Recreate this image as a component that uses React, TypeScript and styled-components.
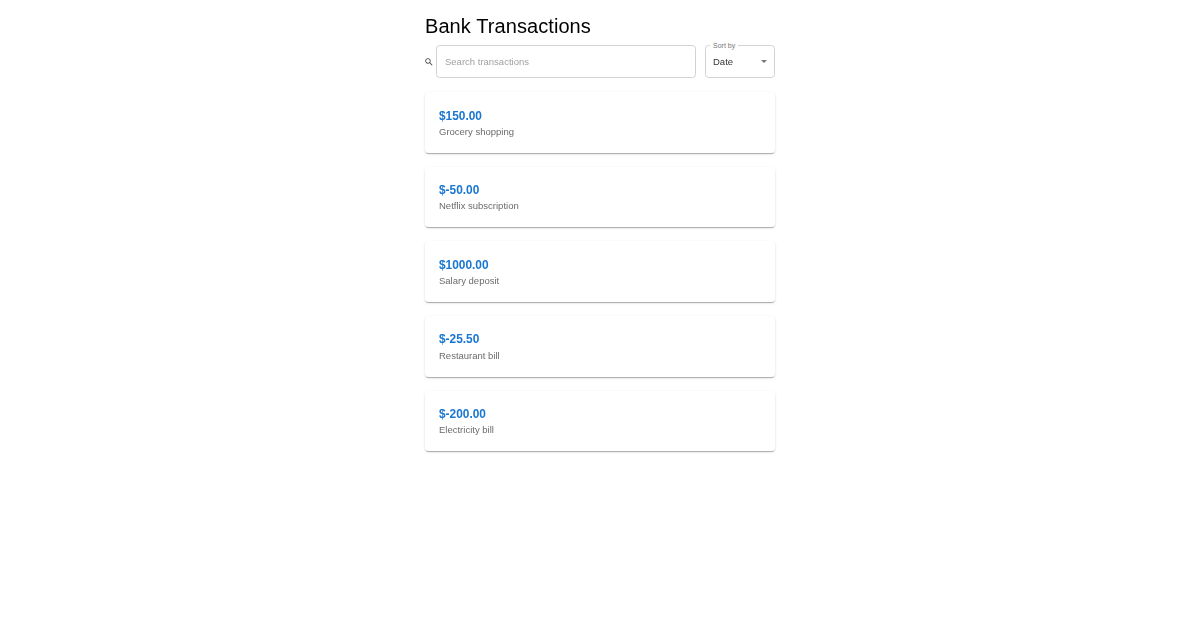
import React from 'react'
import styled, { createGlobalStyle } from 'styled-components'

const GlobalStyle = createGlobalStyle`
    html, body {
        margin: 0;
        padding: 0;
        background: #fff;
        font-family: "Liberation Sans", Arial, sans-serif;
    }
`

const Page = styled.main`
    width: 350px;
    margin: 0 auto;
    padding: 14px 0 24px;
    filter: blur(0.7px);
`

const Title = styled.h1`
    margin: 0 0 7px;
    height: 24px;
    font-size: 20px;
    line-height: 24px;
    font-weight: 400;
    letter-spacing: 0.08px;
    color: #000;
`

const Toolbar = styled.div`
    display: flex;
    align-items: center;
    margin-bottom: 14px;
`

const SearchIcon = styled.svg`
    width: 10px;
    height: 10px;
    margin-right: 2px;
    margin-left: -1px;
    flex: none;
`

const SearchField = styled.input`
    flex: 1;
    min-width: 0;
    height: 33px;
    box-sizing: border-box;
    padding: 0 8px;
    border: 1px solid #d2d2d2;
    border-radius: 3.5px;
    outline: none;
    font: 400 9.5px "Liberation Sans", Arial, sans-serif;
    color: #212121;
    &::placeholder {
        color: #a0a0a0;
        opacity: 1;
    }
`

const SortField = styled.div`
    position: relative;
    display: flex;
    align-items: center;
    justify-content: space-between;
    width: 70px;
    height: 33px;
    box-sizing: border-box;
    margin-left: 9px;
    padding: 0 7px;
    border: 1px solid #d2d2d2;
    border-radius: 3.5px;
    font-size: 9.5px;
    color: #333;
`

const SortLabel = styled.span`
    position: absolute;
    top: -4px;
    left: 4px;
    padding: 0 3px;
    background: #fff;
    font-size: 7px;
    line-height: 8px;
    color: #777;
`

const Caret = styled.span`
    width: 0;
    height: 0;
    border-left: 3px solid transparent;
    border-right: 3px solid transparent;
    border-top: 3px solid #777;
`

const List = styled.div`
    display: flex;
    flex-direction: column;
    gap: 14px;
`

const Card = styled.article`
    height: 60.67px;
    box-sizing: border-box;
    padding: 16.5px 14px 0;
    border-radius: 3.5px;
    background: #fff;
    box-shadow: 0 2px 1px -1px rgba(0, 0, 0, 0.18), 0 1px 1px 0 rgba(0, 0, 0, 0.12),
        0 1px 3px 0 rgba(0, 0, 0, 0.12);
`

const Amount = styled.div`
    font-size: 11.9px;
    line-height: 14px;
    font-weight: 700;
    color: #1976d2;
`

const Description = styled.div`
    margin-top: 2.2px;
    font-size: 9.5px;
    line-height: 14px;
    color: #6b6b6b;
`

const transactions = [
    { amount: '$150.00', description: 'Grocery shopping' },
    { amount: '$-50.00', description: 'Netflix subscription' },
    { amount: '$1000.00', description: 'Salary deposit' },
    { amount: '$-25.50', description: 'Restaurant bill' },
    { amount: '$-200.00', description: 'Electricity bill' },
]

const App: React.FC = () => (
    <>
        <GlobalStyle />
        <Page>
            <Title>Bank Transactions</Title>
            <Toolbar>
                <SearchIcon viewBox="0 0 24 24" fill="#444">
                    <path d="M15.5 14h-.79l-.28-.27C15.41 12.59 16 11.11 16 9.5 16 5.91 13.09 3 9.5 3S3 5.91 3 9.5 5.91 16 9.5 16c1.61 0 3.09-.59 4.23-1.57l.27.28v.79l5 4.99L20.49 19l-4.99-5zm-6 0C7.01 14 5 11.99 5 9.5S7.01 5 9.5 5 14 7.01 14 9.5 11.99 14 9.5 14z" />
                </SearchIcon>
                <SearchField placeholder="Search transactions" />
                <SortField>
                    <SortLabel>Sort by</SortLabel>
                    Date
                    <Caret />
                </SortField>
            </Toolbar>
            <List>
                {transactions.map((t) => (
                    <Card key={t.description}>
                        <Amount>{t.amount}</Amount>
                        <Description>{t.description}</Description>
                    </Card>
                ))}
            </List>
        </Page>
    </>
)

export default App
